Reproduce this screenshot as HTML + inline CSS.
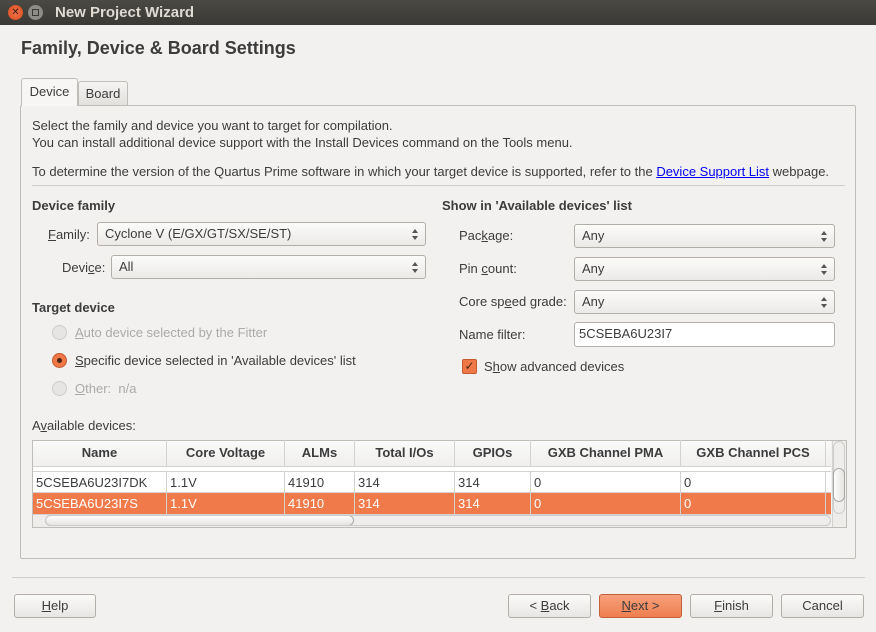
<!DOCTYPE html>
<html><head><style>
*{box-sizing:border-box;margin:0;padding:0}
body{width:876px;height:632px;background:#f2f1f0;font-family:"Liberation Sans",sans-serif;font-size:13px;color:#3c3c3c;position:relative;overflow:hidden}
.a{position:absolute;white-space:nowrap}
.tb{left:0;top:0;width:876px;height:25px;background:linear-gradient(#4a4944,#3a3935)}
.combo{position:absolute;height:24px;border:1px solid #b3afa8;border-radius:3px;background:linear-gradient(#fbfbfa,#eceae8);padding:3px 7px;color:#3c3c3c}
.combo:after{content:"";position:absolute;right:7px;top:6px;width:0;height:0;border-left:3px solid transparent;border-right:3px solid transparent;border-bottom:4px solid #555;box-shadow:none}
.combo:before{content:"";position:absolute;right:7px;top:13px;width:0;height:0;border-left:3px solid transparent;border-right:3px solid transparent;border-top:4px solid #555}
.b{font-weight:bold}
.btn{position:absolute;top:594px;height:24px;border:1px solid #b3afa8;border-radius:3px;background:linear-gradient(#fafafa,#e8e6e3);text-align:center;line-height:22px;color:#3c3c3c}
.radio{position:absolute;width:15px;height:15px;border-radius:50%;border:1px solid #ccc;background:#e6e5e3}
.th{position:absolute;top:440px;height:26px;line-height:26px;text-align:center;font-weight:bold;border-right:1px solid #d4d2cf}
.td{position:absolute;height:21px;line-height:21px;padding-left:3px;border-right:1px solid #d4d2cf}
u{text-decoration:underline}
</style></head><body>
<div class="a tb"></div>
<div class="a" style="left:8px;top:5px;width:15px;height:15px;border-radius:50%;background:radial-gradient(#f2754a,#d9491c);color:#3a1a10;font-size:10px;text-align:center;line-height:15px">✕</div>
<div class="a" style="left:28px;top:5px;width:15px;height:15px;border-radius:50%;background:#8e8c86;"><div style="position:absolute;left:4px;top:4px;width:7px;height:7px;border:1px solid #3a3935"></div></div>
<div class="a b" style="left:55px;top:4px;font-size:15px;color:#dfdbd2">New Project Wizard</div>
<div class="a b" style="left:21px;top:38px;font-size:18px;color:#3c3c3c">Family, Device &amp; Board Settings</div>
<div class="a" style="left:21px;top:78px;width:57px;height:28px;border:1px solid #c0bdb8;border-bottom:none;border-radius:3px 3px 0 0;background:#f7f6f5;text-align:center;line-height:26px;z-index:2">Device</div>
<div class="a" style="left:78px;top:81px;width:50px;height:24px;border:1px solid #c0bdb8;border-bottom:none;border-radius:3px 3px 0 0;background:linear-gradient(#f5f4f3,#e3e1de);text-align:center;line-height:23px">Board</div>
<div class="a" style="left:20px;top:105px;width:836px;height:454px;border:1px solid #c0bdb8;border-radius:2px;background:#f2f1f0"></div>
<div class="a" style="left:32px;top:118px">Select the family and device you want to target for compilation.</div>
<div class="a" style="left:32px;top:135px">You can install additional device support with the Install Devices command on the Tools menu.</div>
<div class="a" style="left:32px;top:164px">To determine the version of the Quartus Prime software in which your target device is supported, refer to the <span style="color:#0000ee;text-decoration:underline">Device Support List</span> webpage.</div>
<div class="a" style="left:32px;top:185px;width:813px;height:1px;background:#d0cdc9"></div>
<div class="a b" style="left:32px;top:198px">Device family</div>
<div class="a" style="left:48px;top:227px"><u>F</u>amily:</div>
<div class="combo" style="left:97px;top:222px;width:329px">Cyclone V (E/GX/GT/SX/SE/ST)</div>
<div class="a" style="left:62px;top:260px">Devi<u>c</u>e:</div>
<div class="combo" style="left:111px;top:255px;width:315px">All</div>
<div class="a b" style="left:32px;top:300px">Target device</div>
<div class="radio" style="left:52px;top:325px"></div>
<div class="a" style="left:75px;top:325px;color:#aaa"><u>A</u>uto device selected by the Fitter</div>
<div class="radio" style="left:52px;top:353px;background:#f07846;border-color:#c45a30"><div style="position:absolute;left:4px;top:4px;width:5px;height:5px;border-radius:50%;background:#4a2515"></div></div>
<div class="a" style="left:75px;top:353px"><u>S</u>pecific device selected in 'Available devices' list</div>
<div class="radio" style="left:52px;top:381px"></div>
<div class="a" style="left:75px;top:381px;color:#aaa"><u>O</u>ther:&nbsp; n/a</div>
<div class="a b" style="left:442px;top:198px">Show in 'Available devices' list</div>
<div class="a" style="left:459px;top:228px">Pac<u>k</u>age:</div>
<div class="combo" style="left:574px;top:224px;width:261px">Any</div>
<div class="a" style="left:459px;top:261px">Pin <u>c</u>ount:</div>
<div class="combo" style="left:574px;top:257px;width:261px">Any</div>
<div class="a" style="left:459px;top:294px">Core sp<u>e</u>ed grade:</div>
<div class="combo" style="left:574px;top:290px;width:261px">Any</div>
<div class="a" style="left:459px;top:327px">Name filter:</div>
<div class="a" style="left:574px;top:322px;width:261px;height:25px;border:1px solid #b3afa8;border-radius:3px;background:#fff;padding:3px 4px">5CSEBA6U23I7</div>
<div class="a" style="left:462px;top:359px;width:15px;height:15px;border-radius:2px;background:#f07846;border:1px solid #c45a30;color:#4a2515;font-size:12px;line-height:13px;text-align:center">✓</div>
<div class="a" style="left:484px;top:359px">S<u>h</u>ow advanced devices</div>
<div class="a" style="left:32px;top:418px">A<u>v</u>ailable devices:</div>
<div class="a" style="left:32px;top:440px;width:815px;height:88px;border:1px solid #c0bdb8;background:#f2f1f0"></div>
<div class="a" style="left:33px;top:441px;width:798px;height:26px;background:linear-gradient(#fafafa,#f0efed);border-bottom:1px solid #d4d2cf"></div>
<div class="th" style="left:33px;width:134px">Name</div>
<div class="th" style="left:167px;width:118px">Core Voltage</div>
<div class="th" style="left:285px;width:70px">ALMs</div>
<div class="th" style="left:355px;width:100px">Total I/Os</div>
<div class="th" style="left:455px;width:76px">GPIOs</div>
<div class="th" style="left:531px;width:150px">GXB Channel PMA</div>
<div class="th" style="left:681px;width:145px">GXB Channel PCS</div>
<div class="a" style="left:33px;top:467px;width:798px;height:5px;background:#fff;border-bottom:1px solid #d4d2cf"></div>
<div class="a" style="left:33px;top:472px;width:798px;height:21px;background:#fff;border-bottom:1px solid #d4d2cf"></div>
<div class="a" style="left:33px;top:493px;width:798px;height:21px;background:#f07a4a"></div>
<div class="td" style="left:33px;top:472px;width:134px">5CSEBA6U23I7DK</div>
<div class="td" style="left:167px;top:472px;width:118px">1.1V</div>
<div class="td" style="left:285px;top:472px;width:70px">41910</div>
<div class="td" style="left:355px;top:472px;width:100px">314</div>
<div class="td" style="left:455px;top:472px;width:76px">314</div>
<div class="td" style="left:531px;top:472px;width:150px">0</div>
<div class="td" style="left:681px;top:472px;width:145px">0</div>
<div class="td" style="left:33px;top:493px;width:134px;color:#fff">5CSEBA6U23I7S</div>
<div class="td" style="left:167px;top:493px;width:118px;color:#fff">1.1V</div>
<div class="td" style="left:285px;top:493px;width:70px;color:#fff">41910</div>
<div class="td" style="left:355px;top:493px;width:100px;color:#fff">314</div>
<div class="td" style="left:455px;top:493px;width:76px;color:#fff">314</div>
<div class="td" style="left:531px;top:493px;width:150px;color:#fff">0</div>
<div class="td" style="left:681px;top:493px;width:145px;color:#fff">0</div>
<div class="a" style="left:33px;top:514px;width:798px;height:13px;background:#eeedeb;border-top:1px solid #d4d2cf"></div>
<div class="a" style="left:45px;top:515px;width:309px;height:11px;border:1px solid #aaa;border-radius:6px;background:linear-gradient(#fdfdfd,#e6e4e1)"></div>
<div class="a" style="left:45px;top:515px;width:786px;height:11px;border:1px solid #ccc;border-radius:6px"></div>
<div class="a" style="left:832px;top:441px;width:14px;height:86px;background:#eeedeb;border-left:1px solid #d4d2cf"></div>
<div class="a" style="left:833px;top:441px;width:12px;height:73px;border:1px solid #ccc;border-radius:6px"></div>
<div class="a" style="left:833px;top:468px;width:12px;height:34px;border:1px solid #aaa;border-radius:6px;background:linear-gradient(90deg,#fdfdfd,#e6e4e1)"></div>
<div class="a" style="left:12px;top:577px;width:853px;height:1px;background:#d0cdc9"></div>
<div class="btn" style="left:14px;width:82px"><u>H</u>elp</div>
<div class="btn" style="left:508px;width:83px">&lt; <u>B</u>ack</div>
<div class="btn" style="left:599px;width:83px;background:linear-gradient(#f6a07c,#ef7e4e);border-color:#c4603a"><u>N</u>ext &gt;</div>
<div class="btn" style="left:690px;width:83px"><u>F</u>inish</div>
<div class="btn" style="left:781px;width:83px">Cancel</div>
</body></html>
